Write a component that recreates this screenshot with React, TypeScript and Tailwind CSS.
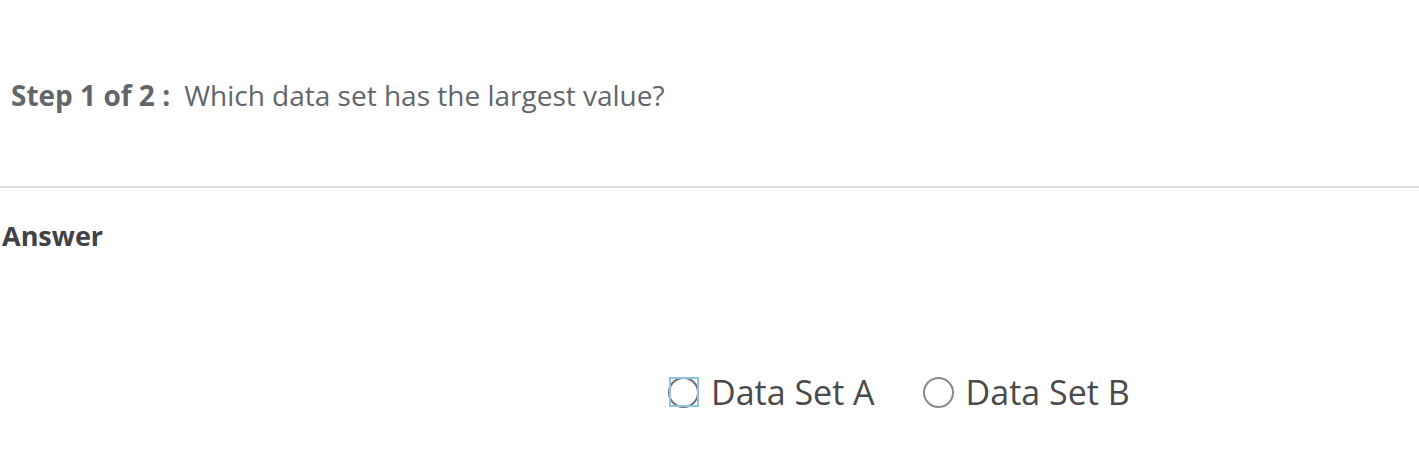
import React from "react";

export default function App() {
  return (
    <div className="w-[1419px] h-[452px] bg-white" style={{ fontFamily: '"Open Sans", sans-serif' }}>
      <div className="h-[186px] flex items-center pl-[11px] pt-[4px] leading-[40px]">
        <span className="text-[28px] font-bold text-[#62666b]">Step 1 of 2 :</span>
        <span className="text-[28px] text-[#62666b] ml-[14px]">Which data set has the largest value?</span>
      </div>
      <div className="h-[2px] bg-[#dddddd]" />
      <div className="pl-[2px] pt-[30px] text-[27px] font-bold text-[#404246] leading-[36px]">Answer</div>
      <div className="flex items-center pl-[668px] mt-[114px] text-[34px] leading-[48px] text-[#4a4a4a]">
        <label className="flex items-center">
          <span className="relative w-[31px] h-[31px] rounded-full border-[2.5px] border-[#6e6e78]">
            <span className="absolute -inset-[1.5px] border-[2px] border-[#8fc5db]" />
          </span>
          <span className="ml-[12px]">Data Set A</span>
        </label>
        <label className="flex items-center ml-[48px]">
          <span className="w-[31px] h-[31px] rounded-full border-[2.5px] border-[#8a8a8a]" />
          <span className="ml-[12px]">Data Set B</span>
        </label>
      </div>
    </div>
  );
}
